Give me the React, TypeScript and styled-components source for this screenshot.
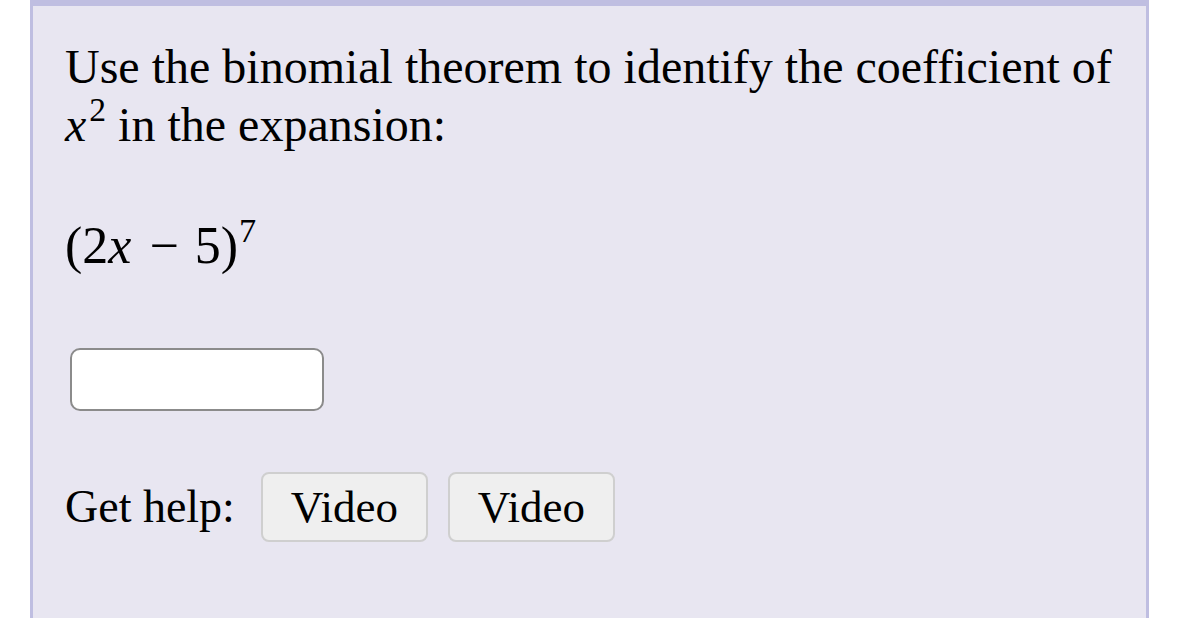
import React from 'react';
import styled, { createGlobalStyle } from 'styled-components';

const Global = createGlobalStyle`
  html, body {
    margin: 0;
    padding: 0;
    background: #ffffff;
    overflow: hidden;
  }
  body {
    font-family: "Liberation Serif", "Times New Roman", serif;
    color: #000;
  }
`;

const Panel = styled.div`
  box-sizing: border-box;
  margin-left: 30px;
  width: 1119px;
  height: 618px;
  background: #e8e6f1;
  border: 3px solid #bfbee1;
  border-top-width: 6px;
  border-bottom: none;
  padding: 32px 32px 0 32px;
  font-size: 48px;
  line-height: 58px;
`;

const Prompt = styled.p`
  margin: 0;
`;

const MathVar = styled.span`
  font-style: italic;
  font-family: "Liberation Serif", serif;
  padding-right: 2px;
`;

const Sup = styled.sup<{ $size?: number }>`
  font-size: ${p => p.$size ?? 0.7}em;
  line-height: 0;
  vertical-align: 0.6em;
  margin-left: 1px;
`;

const Expression = styled.p`
  margin: 63px 0 0 0;
  font-size: 52px;
`;

const Minus = styled.span`
  margin: 0 16px;
`;

const AnswerBox = styled.input`
  display: block;
  margin: 73px 0 0 5px;
  width: 254px;
  height: 63px;
  box-sizing: border-box;
  border: 2px solid #8b8b8b;
  border-radius: 10px;
  background: #fff;
  outline: none;
`;

const HelpRow = styled.div`
  display: flex;
  align-items: center;
  margin-top: 61px;
  gap: 20px;
  font-size: 46px;
`;

const HelpLabel = styled.span`
  margin-right: 6px;
`;

const HelpButton = styled.button`
  height: 70px;
  width: 167px;
  box-sizing: border-box;
  background: #efefef;
  border: 2px solid #cfcfcf;
  border-radius: 8px;
  font-family: "Liberation Serif", "Times New Roman", serif;
  font-size: 45px;
  color: #000;
  padding: 0;
`;

export default function App() {
  return (
    <>
      <Global />
      <Panel>
        <Prompt>
          Use the binomial theorem to identify the coefficient of{' '}
          <MathVar>x</MathVar>
          <Sup>2</Sup> in the expansion:
        </Prompt>
        <Expression>
          (2<MathVar>x</MathVar>
          <Minus>−</Minus>5)<Sup $size={0.66}>7</Sup>
        </Expression>
        <AnswerBox type="text" aria-label="answer" />
        <HelpRow>
          <HelpLabel>Get help:</HelpLabel>
          <HelpButton>Video</HelpButton>
          <HelpButton>Video</HelpButton>
        </HelpRow>
      </Panel>
    </>
  );
}
